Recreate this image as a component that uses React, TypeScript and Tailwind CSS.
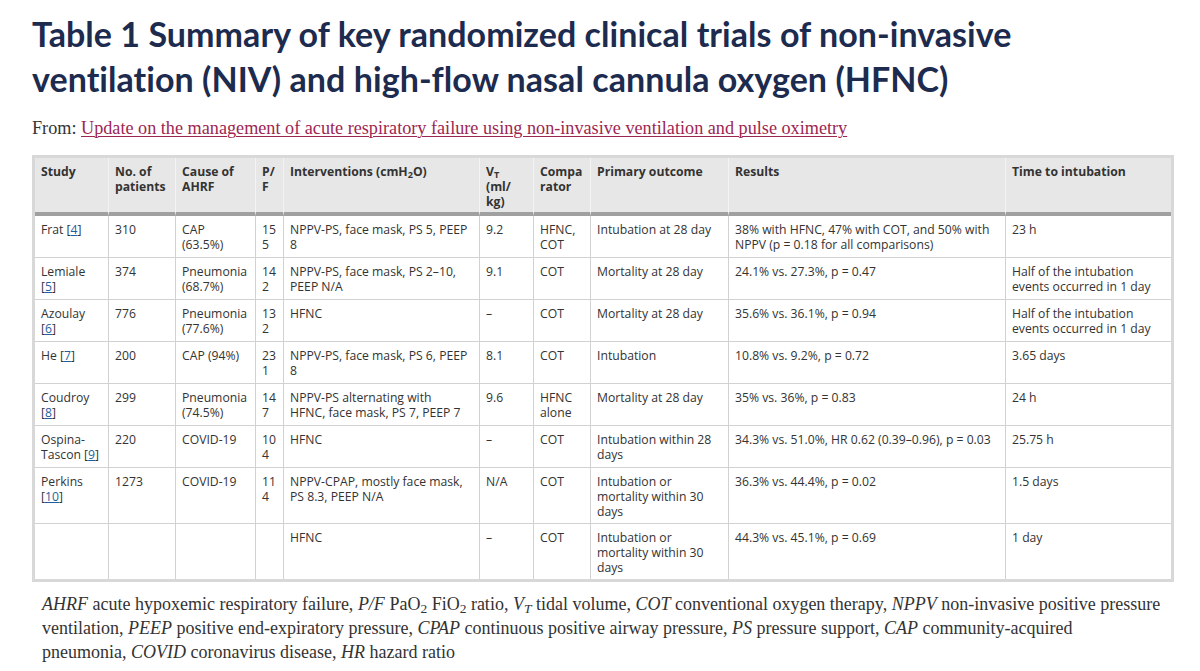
import React from "react";

type Cell = React.ReactNode[];

function Ref({ n }: { n: string }) {
  return (
    <>
      [<span className="text-[#1f5f9e] underline underline-offset-1">{n}</span>]
    </>
  );
}

function Lines({ lines }: { lines: Cell }) {
  return (
    <>
      {lines.map((l, i) => (
        <React.Fragment key={i}>
          {i > 0 && <br />}
          {l}
        </React.Fragment>
      ))}
    </>
  );
}

const header: Cell[] = [
  ["Study"],
  ["No. of", "patients"],
  ["Cause of", "AHRF"],
  ["P/", "F"],
  [
    <>
      Interventions (cmH<sub>2</sub>O)
    </>,
  ],
  [
    <>
      V<sub>T</sub>
    </>,
    "(ml/",
    "kg)",
  ],
  ["Compa", "rator"],
  ["Primary outcome"],
  ["Results"],
  ["Time to intubation"],
];

const rows: Cell[][] = [
  [
    [<>Frat <Ref n="4" /></>],
    ["310"],
    ["CAP", "(63.5%)"],
    ["15", "5"],
    ["NPPV-PS, face mask, PS 5, PEEP", "8"],
    ["9.2"],
    ["HFNC,", "COT"],
    ["Intubation at 28 day"],
    ["38% with HFNC, 47% with COT, and 50% with", "NPPV (p = 0.18 for all comparisons)"],
    ["23 h"],
  ],
  [
    ["Lemiale", <Ref n="5" />],
    ["374"],
    ["Pneumonia", "(68.7%)"],
    ["14", "2"],
    ["NPPV-PS, face mask, PS 2–10,", "PEEP N/A"],
    ["9.1"],
    ["COT"],
    ["Mortality at 28 day"],
    ["24.1% vs. 27.3%, p = 0.47"],
    ["Half of the intubation", "events occurred in 1 day"],
  ],
  [
    ["Azoulay", <Ref n="6" />],
    ["776"],
    ["Pneumonia", "(77.6%)"],
    ["13", "2"],
    ["HFNC"],
    ["–"],
    ["COT"],
    ["Mortality at 28 day"],
    ["35.6% vs. 36.1%, p = 0.94"],
    ["Half of the intubation", "events occurred in 1 day"],
  ],
  [
    [<>He <Ref n="7" /></>],
    ["200"],
    ["CAP (94%)"],
    ["23", "1"],
    ["NPPV-PS, face mask, PS 6, PEEP", "8"],
    ["8.1"],
    ["COT"],
    ["Intubation"],
    ["10.8% vs. 9.2%, p = 0.72"],
    ["3.65 days"],
  ],
  [
    ["Coudroy", <Ref n="8" />],
    ["299"],
    ["Pneumonia", "(74.5%)"],
    ["14", "7"],
    ["NPPV-PS alternating with", "HFNC, face mask, PS 7, PEEP 7"],
    ["9.6"],
    ["HFNC", "alone"],
    ["Mortality at 28 day"],
    ["35% vs. 36%, p = 0.83"],
    ["24 h"],
  ],
  [
    ["Ospina-", <>Tascon <Ref n="9" /></>],
    ["220"],
    ["COVID-19"],
    ["10", "4"],
    ["HFNC"],
    ["–"],
    ["COT"],
    ["Intubation within 28", "days"],
    ["34.3% vs. 51.0%, HR 0.62 (0.39–0.96), p = 0.03"],
    ["25.75 h"],
  ],
  [
    ["Perkins", <Ref n="10" />],
    ["1273"],
    ["COVID-19"],
    ["11", "4"],
    ["NPPV-CPAP, mostly face mask,", "PS 8.3, PEEP N/A"],
    ["N/A"],
    ["COT"],
    ["Intubation or", "mortality within 30", "days"],
    ["36.3% vs. 44.4%, p = 0.02"],
    ["1.5 days"],
  ],
  [
    [""],
    [""],
    [""],
    [""],
    ["HFNC"],
    ["–"],
    ["COT"],
    ["Intubation or", "mortality within 30", "days"],
    ["44.3% vs. 45.1%, p = 0.69"],
    ["1 day"],
  ],
];

export default function App() {
  return (
    <div className="w-[1200px] h-[671px] overflow-hidden bg-white pl-[32px] pt-[11px]">
      <h1 className="font-['Lato',sans-serif] font-bold text-[34px] leading-[45px] text-[#1d2b4f] tracking-[0.05px]">
        Table 1 Summary of key randomized clinical trials of non-invasive
        <br />
        ventilation (NIV) and high-flow nasal cannula oxygen (HFNC)
      </h1>
      <p className="mt-[15px] font-['Liberation_Serif','Times_New_Roman',serif] text-[18.2px] leading-[24px] text-[#333333]">
        From:{" "}
        <a className="text-[#9c2652] underline underline-offset-2 decoration-1">
          Update on the management of acute respiratory failure using non-invasive ventilation and pulse oximetry
        </a>
      </p>
      <table className="mt-[15px] table-fixed border-separate border-spacing-0 w-[1142px] border-[3px] border-[#d8d8d8] font-['Open_Sans',sans-serif] text-[12.2px] leading-[15px] text-[#333333]">
        <colgroup>
          <col className="w-[74px]" />
          <col className="w-[67px]" />
          <col className="w-[80px]" />
          <col className="w-[28px]" />
          <col className="w-[196px]" />
          <col className="w-[54px]" />
          <col className="w-[57px]" />
          <col className="w-[138px]" />
          <col className="w-[277px]" />
          <col className="w-[165px]" />
        </colgroup>
        <thead>
          <tr>
            {header.map((h, i) => (
              <th
                key={i}
                className={
                  i < header.length - 1
                    ? "bg-[#e7e7e7] font-bold text-left align-top whitespace-nowrap px-[6px] pt-[6px] pb-[3px] border-r border-r-[#f3f3f3] border-b-[4px] border-b-[#a0a0a0]"
                    : "bg-[#e7e7e7] font-bold text-left align-top whitespace-nowrap px-[6px] pt-[6px] pb-[3px] border-b-[4px] border-b-[#a0a0a0]"
                }
              >
                <Lines lines={h} />
              </th>
            ))}
          </tr>
        </thead>
        <tbody>
          {rows.map((r, ri) => (
            <tr key={ri}>
              {r.map((c, ci) => {
                const last = ri === rows.length - 1;
                const lastCol = ci === r.length - 1;
                const three = c.length === 3;
                let cls = "align-top text-left whitespace-nowrap px-[6px] pt-[6px] pb-[5px] border-[#d2d2d2]";
                if (three) cls = "align-top text-left whitespace-nowrap px-[6px] pt-[6px] pb-[4px] border-[#d2d2d2]";
                if (!last) cls += " border-b";
                if (!lastCol) cls += " border-r";
                return (
                  <td key={ci} className={cls}>
                    <Lines lines={c} />
                  </td>
                );
              })}
            </tr>
          ))}
        </tbody>
      </table>
      <p className="mt-[10px] pl-[10px] font-['Liberation_Serif','Times_New_Roman',serif] text-[18px] leading-[24px] text-[#333333]">
        <i>AHRF</i> acute hypoxemic respiratory failure, <i>P/F</i> PaO<sub>2</sub> FiO<sub>2</sub> ratio,{" "}
        <i>
          V<sub>T</sub>
        </i>{" "}
        tidal volume, <i>COT</i> conventional oxygen therapy, <i>NPPV</i> non-invasive positive pressure
        <br />
        ventilation, <i>PEEP</i> positive end-expiratory pressure, <i>CPAP</i> continuous positive airway pressure,{" "}
        <i>PS</i> pressure support, <i>CAP</i> community-acquired
        <br />
        pneumonia, <i>COVID</i> coronavirus disease, <i>HR</i> hazard ratio
      </p>
    </div>
  );
}
